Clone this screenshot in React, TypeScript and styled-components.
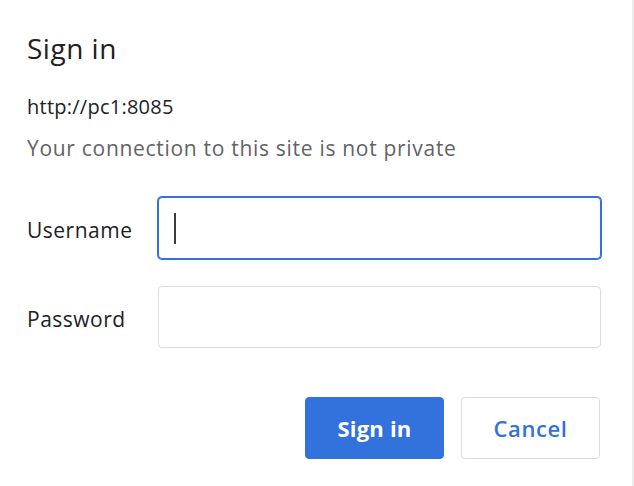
import styled, { createGlobalStyle } from "styled-components";

const GlobalStyle = createGlobalStyle`
  html, body {
    margin: 0;
    padding: 0;
    background: #ffffff;
  }
  body {
    font-family: "Segoe UI", "Open Sans", "Noto Sans", sans-serif;
    -webkit-font-smoothing: antialiased;
  }
`;

const BLUE = "#3371dd";

/* ─── Styled Components ─── */

const Dialog = styled.div`
  box-sizing: border-box;
  width: 634px;
  height: 486px;
  padding: 32px 32px 0 27px;
  border-right: 2px solid #ececec;
  display: flex;
  flex-direction: column;
`;

const Title = styled.h1`
  margin: 0;
  font-size: 28px;
  line-height: 32px;
  font-weight: 400;
  letter-spacing: 0.5px;
  color: #202124;
`;

const Origin = styled.div`
  margin-top: 30px;
  font-size: 20px;
  line-height: 26px;
  letter-spacing: 0.25px;
  color: #202124;
`;

const Note = styled.div`
  margin-top: 15px;
  font-size: 21px;
  line-height: 26px;
  letter-spacing: 0.7px;
  color: #5f6368;
`;

const Form = styled.div`
  margin-top: 36px;
  display: grid;
  grid-template-columns: 131px 1fr;
  row-gap: 27px;
  align-items: center;
`;

const Label = styled.label`
  padding-top: 3px;
  font-size: 21px;
  letter-spacing: 0.5px;
  color: #202124;
`;

const FieldWrap = styled.div`
  position: relative;
`;

const Field = styled.input<{ $focused?: boolean }>`
  box-sizing: border-box;
  display: block;
  width: 443px;
  height: 62px;
  margin: 0;
  padding: 0 16px;
  border: 1px solid ${(p) => (p.$focused ? BLUE : "#dadce0")};
  border-radius: 4px;
  box-shadow: ${(p) => (p.$focused ? `0 0 0 1px ${BLUE}` : "none")};
  outline: none;
  font: inherit;
  font-size: 20px;
  background: #fff;
  caret-color: transparent;
`;

const Caret = styled.span`
  position: absolute;
  left: 16px;
  top: 16px;
  width: 2px;
  height: 31px;
  background: #3c3c3c;
`;

const Actions = styled.div`
  margin-top: 49px;
  display: flex;
  justify-content: flex-end;
  gap: 17px;
`;

const Button = styled.button<{ $primary?: boolean }>`
  box-sizing: border-box;
  width: 139px;
  height: 62px;
  border-radius: 4px;
  border: 1px solid ${(p) => (p.$primary ? BLUE : "#dadce0")};
  background: ${(p) => (p.$primary ? BLUE : "#ffffff")};
  color: ${(p) => (p.$primary ? "#ffffff" : BLUE)};
  font-family: inherit;
  font-size: 22px;
  font-weight: ${(p) => (p.$primary ? 700 : 600)};
  letter-spacing: ${(p) => (p.$primary ? "0.2px" : "0.6px")};
  cursor: pointer;
`;

/* ─── Component ─── */

export default function App() {
  return (
    <>
      <GlobalStyle />
      <Dialog>
        <Title>Sign in</Title>
        <Origin>http://pc1:8085</Origin>
        <Note>Your connection to this site is not private</Note>

        <Form>
          <Label htmlFor="username">Username</Label>
          <FieldWrap>
            <Field id="username" type="text" $focused />
            <Caret />
          </FieldWrap>

          <Label htmlFor="password">Password</Label>
          <FieldWrap>
            <Field id="password" type="password" />
          </FieldWrap>
        </Form>

        <Actions>
          <Button $primary>Sign in</Button>
          <Button>Cancel</Button>
        </Actions>
      </Dialog>
    </>
  );
}
